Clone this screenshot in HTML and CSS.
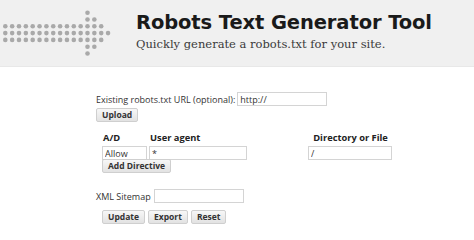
FILE: index.html
```html
<!DOCTYPE html>
<html>
<head>
<meta charset="utf-8">
<link rel="stylesheet" href="styles.css">
</head>
<body>
<header class="banner">
  <svg class="arrow" width="114" height="67" viewBox="0 0 114 67" id="arrow"></svg>
  <div class="titles">
    <h1 class="title">Robots Text Generator Tool</h1>
    <p class="subtitle">Quickly generate a robots.txt for your site.</p>
  </div>
</header>
<main class="form">
  <div class="row url-row">
    <label class="lbl">Existing robots.txt URL (optional):</label>
    <input class="field url" type="text" value="http://">
  </div>
  <div class="row upload-row"><button class="btn">Upload</button></div>
  <div class="directives">
    <div class="hd">A/D</div>
    <div class="hd">User agent</div>
    <div class="hd center">Directory or File</div>
    <input class="field ad" type="text" value="Allow">
    <input class="field ua" type="text" value="*">
    <input class="field dir" type="text" value="/">
  </div>
  <div class="row add-row"><button class="btn">Add Directive</button></div>
  <div class="row sitemap-row">
    <label class="lbl">XML Sitemap</label>
    <input class="field sitemap" type="text" value="">
  </div>
  <div class="row actions">
    <button class="btn">Update</button>
    <button class="btn">Export</button>
    <button class="btn">Reset</button>
  </div>
</main>
<script src="script.js"></script>
</body>
</html>
```
FILE: script.js
```js
(function(){
  var svg=document.getElementById('arrow');
  var ns='http://www.w3.org/2000/svg';
  var dots=[];
  for(var c=0;c<12;c++){for(var r=2;r<=4;r++){dots.push([c,r]);}}
  for(var r=0;r<=6;r++)dots.push([12,r]);
  for(var r=1;r<=5;r++)dots.push([13,r]);
  for(var r=2;r<=4;r++)dots.push([14,r]);
  dots.push([15,3]);
  dots.forEach(function(d){
    var e=document.createElementNS(ns,'circle');
    e.setAttribute('cx',(5.3+d[0]*6.85).toFixed(2));
    e.setAttribute('cy',(12.7+d[1]*6.8).toFixed(2));
    e.setAttribute('r','2.3');
    e.setAttribute('fill','#a9a9a9');
    svg.appendChild(e);
  });
})();
```
FILE: styles.css
```css
html, body { margin: 0; padding: 0; background: #fff; }
body { width: 474px; height: 228px; overflow: hidden; font-family: "Open Sans", sans-serif; color: #333; }
.banner { height: 67px; background: #f0f0f0; display: flex; align-items: flex-start; border-bottom: 1px solid #e8e8e8; box-sizing: border-box; }
.arrow { flex: none; display: block; }
.titles { margin-left: 22px; padding-top: 11px; }
.title { margin: 0; font-family: "DejaVu Sans", sans-serif; font-weight: 700; font-size: 19.5px; line-height: 24px; color: #1a1a1a; letter-spacing: -0.1px; }
.subtitle { margin: 2px 0 0 0; font-family: "DejaVu Serif", serif; font-size: 11.5px; line-height: 14px; color: #3a3a3a; }
.form { padding-left: 96px; padding-top: 25px; }
.row { display: flex; align-items: center; gap: 2px; }
.lbl { font-size: 9px; color: #333; }
.field { box-sizing: border-box; height: 14px; border: 1px solid #d4d4d4; background: #fff; font-family: "Open Sans", sans-serif; font-size: 9px; color: #333; padding: 0 2px; margin: 0; outline: none; }
.url { width: 90px; margin-left: 0; }
.btn { box-sizing: border-box; height: 14px; padding: 0 5px; margin: 0; border: 1px solid #cfcfcf; border-radius: 2px; background: linear-gradient(#f7f7f7, #e2e2e2); font-family: "Open Sans", sans-serif; font-weight: 700; font-size: 8.5px; color: #333; line-height: 12px; }
.url-row { height: 14px; }
.upload-row { margin-top: 2px; }
.directives { display: grid; grid-template-columns: 47px 159px 84px; margin: 10px 0 0 6px; row-gap: 2px; }
.hd { font-weight: 700; font-size: 9.3px; line-height: 12px; padding-left: 1px; color: #222; }
.center { text-align: center; }
.ad { width: 45px; }
.ua { width: 98px; }
.dir { width: 84px; }
.add-row { margin-left: 6px; margin-top: -1px; }
.sitemap-row { margin-top: 16px; }
.sitemap { width: 90px; margin-left: 1px; }
.actions { margin-left: 6px; margin-top: 7px; gap: 3px; }
```
